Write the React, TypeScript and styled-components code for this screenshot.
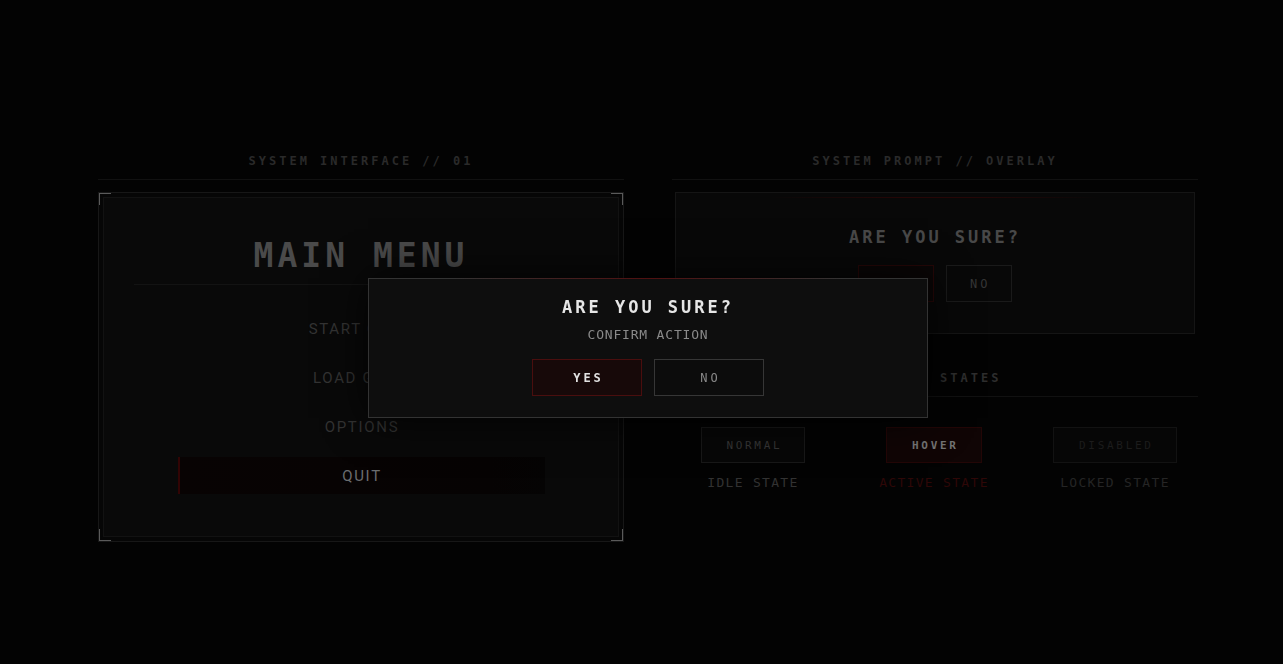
import React from 'react';
import styled, { createGlobalStyle } from 'styled-components';

const mono = `'DejaVu Sans Mono', 'Liberation Mono', monospace`;

const GlobalStyle = createGlobalStyle`
  html, body {
    margin: 0;
    padding: 0;
    background: #030303;
    min-height: 100%;
  }
  body {
    font-family: ${mono};
  }
  * {
    box-sizing: border-box;
  }
`;

const Page = styled.div`
  display: grid;
  grid-template-columns: 526px 526px;
  column-gap: 48px;
  align-items: start;
  padding: 153px 0 0 98px;
  min-height: 664px;
  background: #030303;
`;

const Column = styled.section`
  display: flex;
  flex-direction: column;
`;

const SectionHeader = styled.h2<{ $tone?: string }>`
  margin: 0 0 12px;
  padding-bottom: 10px;
  border-bottom: 1px solid #111;
  font-family: ${mono};
  font-weight: 700;
  font-size: 12px;
  line-height: 16px;
  letter-spacing: 3px;
  text-align: center;
  color: ${({ $tone }) => $tone || '#2a2a2a'};
`;

// main menu frame with the double border and corner brackets
const Frame = styled.div`
  position: relative;
  height: 350px;
  padding: 4px;
  border: 1px solid #171717;
  background: #060606;
`;

const Corner = styled.span<{ $v: 'top' | 'bottom'; $h: 'left' | 'right' }>`
  position: absolute;
  width: 12px;
  height: 12px;
  ${({ $v }) => $v}: 0;
  ${({ $h }) => $h}: 0;
  border-${({ $v }) => $v}: 1px solid #5a5a5a;
  border-${({ $h }) => $h}: 1px solid #5a5a5a;
`;

const FrameInner = styled.div`
  height: 100%;
  padding: 37px 0 0;
  border: 1px solid #121212;
  background: #090909;
`;

const MenuTitle = styled.h1`
  margin: 0 30px;
  padding-bottom: 7px;
  border-bottom: 1px solid #131313;
  font-family: ${mono};
  font-weight: 700;
  font-size: 33px;
  line-height: 42px;
  letter-spacing: 4px;
  text-align: center;
  color: #4a4a4a;
`;

const MenuList = styled.div`
  display: flex;
  flex-direction: column;
  gap: 12px;
  width: 367px;
  margin: 25px auto 0;
`;

const MenuItem = styled.div<{ $active?: boolean }>`
  height: 37px;
  display: flex;
  align-items: center;
  justify-content: center;
  font-family: Roboto, 'Liberation Sans', sans-serif;
  font-size: 15px;
  letter-spacing: 1.7px;
  color: ${({ $active }) => ($active ? '#6c6e70' : '#333333')};
  border-left: 2px solid ${({ $active }) => ($active ? '#320404' : 'transparent')};
  background: ${({ $active }) =>
    $active ? 'linear-gradient(90deg, #080303, #060303 85%, #050404)' : 'transparent'};
`;

const PromptBox = styled.div`
  position: relative;
  margin: 0 3px;
  padding: 34px 20px 31px;
  border: 1px solid #151515;
  background: #080808;
  display: flex;
  flex-direction: column;
  align-items: center;

  &::before {
    content: '';
    position: absolute;
    top: 4px;
    left: 18%;
    right: 18%;
    height: 1px;
    background: linear-gradient(90deg, transparent, #260606 40%, #260606 60%, transparent);
  }
`;

const PromptTitle = styled.div<{ $bright?: boolean }>`
  font-family: ${mono};
  font-weight: 700;
  font-size: 17px;
  line-height: 20px;
  letter-spacing: 3px;
  color: ${({ $bright }) => ($bright ? '#e6e6e6' : '#484848')};
`;

const ButtonRow = styled.div<{ $top: number }>`
  display: flex;
  justify-content: center;
  gap: 12px;
  margin-top: ${({ $top }) => $top}px;
`;

type Tone = 'confirm' | 'cancel' | 'dimConfirm' | 'dimCancel';

const toneStyles: Record<Tone, { bg: string; border: string; color: string }> = {
  confirm: { bg: '#170909', border: '#4a0e0e', color: '#e2e2e2' },
  cancel: { bg: '#0c0c0c', border: '#363636', color: '#8a8a8a' },
  dimConfirm: { bg: '#0a0606', border: '#260707', color: '#4a4a4a' },
  dimCancel: { bg: '#080808', border: '#1a1a1a', color: '#363636' },
};

const PromptButton = styled.button<{ $tone: Tone; $wide?: boolean }>`
  height: 37px;
  ${({ $wide }) => ($wide ? 'width: 110px;' : 'padding: 0 20px;')}
  font-family: ${mono};
  font-weight: ${({ $tone }) => ($tone === 'confirm' ? 700 : 400)};
  font-size: 12px;
  letter-spacing: 3px;
  text-indent: 3px;
  color: ${({ $tone }) => toneStyles[$tone].color};
  background: ${({ $tone }) => toneStyles[$tone].bg};
  border: 1px solid ${({ $tone }) => toneStyles[$tone].border};
  cursor: pointer;
`;

const StatesSection = styled.div`
  margin-top: 36px;
  display: flex;
  flex-direction: column;
`;

const StatesHeader = styled(SectionHeader)`
  margin-bottom: 30px;
  color: #2e2e2e;
`;

const StatesGrid = styled.div`
  display: grid;
  grid-template-columns: repeat(3, 181px);
  justify-content: center;
  margin-left: -2px;
`;

const StateCell = styled.div`
  display: flex;
  flex-direction: column;
  align-items: center;
  gap: 12px;
`;

type StateKind = 'normal' | 'hover' | 'disabled';

const stateStyles: Record<StateKind, { bg: string; border: string; color: string; caption: string }> = {
  normal: { bg: '#070707', border: '#181818', color: '#353535', caption: '#323232' },
  hover: { bg: '#100505', border: '#230606', color: '#747474', caption: '#2e0707' },
  disabled: { bg: '#060606', border: '#121212', color: '#1c1c1c', caption: '#252525' },
};

const StateButton = styled.button<{ $kind: StateKind }>`
  height: 36px;
  padding: 0 22px;
  font-family: ${mono};
  font-weight: ${({ $kind }) => ($kind === 'hover' ? 700 : 400)};
  font-size: 11px;
  letter-spacing: 2.7px;
  text-indent: 2.7px;
  color: ${({ $kind }) => stateStyles[$kind].color};
  background: ${({ $kind }) => stateStyles[$kind].bg};
  border: 1px solid ${({ $kind }) => stateStyles[$kind].border};
`;

const StateCaption = styled.div<{ $kind: StateKind }>`
  font-family: ${mono};
  font-size: 13px;
  line-height: 16px;
  letter-spacing: 1.3px;
  color: ${({ $kind }) => stateStyles[$kind].caption};
`;

const Modal = styled.div`
  position: fixed;
  top: 278px;
  left: 368px;
  width: 560px;
  padding: 18px 20px 21px;
  border: 1px solid #333;
  background: #0e0e0e;
  display: flex;
  flex-direction: column;
  align-items: center;
  box-shadow: 0 0 40px rgba(0, 0, 0, 0.8);

  &::before {
    content: '';
    position: absolute;
    top: -1px;
    left: 15%;
    right: 15%;
    height: 1px;
    background: linear-gradient(90deg, transparent, #501010 50%, transparent);
  }
`;

const ModalSub = styled.div`
  margin-top: 10px;
  font-family: ${mono};
  font-size: 13px;
  line-height: 16px;
  letter-spacing: 0.8px;
  color: #8a8a8a;
`;

const states: { kind: StateKind; label: string; caption: string }[] = [
  { kind: 'normal', label: 'NORMAL', caption: 'IDLE STATE' },
  { kind: 'hover', label: 'HOVER', caption: 'ACTIVE STATE' },
  { kind: 'disabled', label: 'DISABLED', caption: 'LOCKED STATE' },
];

const menu = ['START GAME', 'LOAD GAME', 'OPTIONS', 'QUIT'];

export default function App() {
  return (
    <>
      <GlobalStyle />
      <Page>
        <Column>
          <SectionHeader>SYSTEM INTERFACE // 01</SectionHeader>
          <Frame>
            <Corner $v="top" $h="left" />
            <Corner $v="top" $h="right" />
            <Corner $v="bottom" $h="left" />
            <Corner $v="bottom" $h="right" />
            <FrameInner>
              <MenuTitle>MAIN MENU</MenuTitle>
              <MenuList>
                {menu.map((item) => (
                  <MenuItem key={item} $active={item === 'QUIT'}>
                    {item}
                  </MenuItem>
                ))}
              </MenuList>
            </FrameInner>
          </Frame>
        </Column>

        <Column>
          <SectionHeader>SYSTEM PROMPT // OVERLAY</SectionHeader>
          <PromptBox>
            <PromptTitle>ARE YOU SURE?</PromptTitle>
            <ButtonRow $top={18}>
              <PromptButton $tone="dimConfirm">YES</PromptButton>
              <PromptButton $tone="dimCancel">NO</PromptButton>
            </ButtonRow>
          </PromptBox>

          <StatesSection>
            <StatesHeader>BUTTON STATES</StatesHeader>
            <StatesGrid>
              {states.map((s) => (
                <StateCell key={s.kind}>
                  <StateButton $kind={s.kind} disabled={s.kind === 'disabled'}>
                    {s.label}
                  </StateButton>
                  <StateCaption $kind={s.kind}>{s.caption}</StateCaption>
                </StateCell>
              ))}
            </StatesGrid>
          </StatesSection>
        </Column>
      </Page>

      <Modal>
        <PromptTitle $bright>ARE YOU SURE?</PromptTitle>
        <ModalSub>CONFIRM ACTION</ModalSub>
        <ButtonRow $top={16}>
          <PromptButton $tone="confirm" $wide>
            YES
          </PromptButton>
          <PromptButton $tone="cancel" $wide>
            NO
          </PromptButton>
        </ButtonRow>
      </Modal>
    </>
  );
}
